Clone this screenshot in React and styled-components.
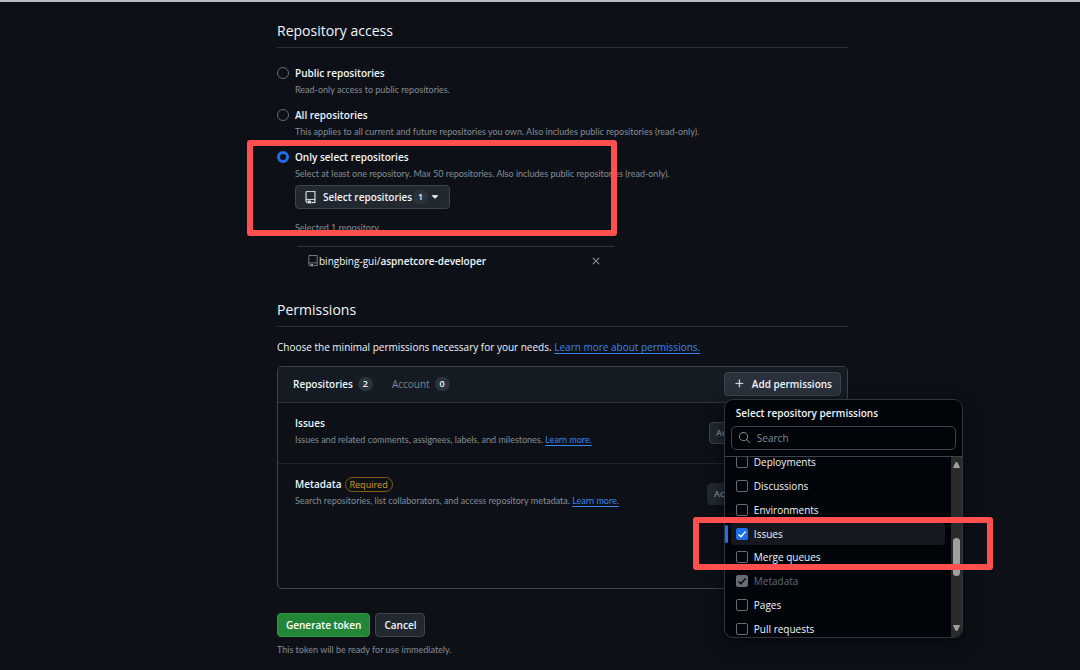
import React from "react";
import styled, { createGlobalStyle } from "styled-components";
import { GoPlus, GoRepo, GoSearch, GoTriangleDown, GoX } from "react-icons/go";

const GlobalStyle = createGlobalStyle`
  * {
    box-sizing: border-box;
  }

  body {
    margin: 0;
    background: #0d1117;
    color: #f0f6fc;
    font-family: "Open Sans", "Noto Sans", sans-serif;
    font-size: 10px;
    line-height: 16px;
  }

  button,
  input {
    font: inherit;
    color: inherit;
    margin: 0;
  }
`;

const Page = styled.main`
  min-height: 100vh;
  border-top: 2px solid #b9bdbf;
  padding: 19px 232px 12px 277px;
`;

const Heading = styled.h2`
  margin: 0;
  padding-bottom: 6px;
  border-bottom: 1px solid #2a3038;
  font-size: 14px;
  line-height: 20px;
  font-weight: 400;
`;

const Section = styled.section`
  margin-bottom: 25px;
`;

const Options = styled.div`
  display: flex;
  flex-direction: column;
  gap: 9px;
  padding-top: 17px;
`;

const Option = styled.div`
  position: relative;
  display: grid;
  grid-template-columns: 12px 1fr;
  column-gap: 6px;
  row-gap: 1px;
  align-items: center;
`;

const Radio = styled.input`
  appearance: none;
  width: 12px;
  height: 12px;
  border: 1px solid #656c76;
  border-radius: 50%;

  &:checked {
    border: 3px solid #1f6feb;
  }
`;

const OptionLabel = styled.label`
  font-weight: 600;
`;

const Note = styled.p`
  grid-column: 2;
  margin: 0;
  color: #858c95;
  font-family: Lato, "Open Sans", sans-serif;
  font-size: 9px;
  line-height: 16px;
`;

const Picker = styled.div`
  grid-column: 2;
  display: flex;
  flex-direction: column;
  align-items: flex-start;
  gap: 11px;
  padding-top: 2px;
`;

const Button = styled.button`
  display: inline-flex;
  align-items: center;
  justify-content: center;
  height: 24px;
  padding: 0 8px;
  border: 1px solid ${(props) => (props.$primary ? "#2e9a43" : "#3d444d")};
  border-radius: 4px;
  background: ${(props) =>
    props.$primary ? "#238636" : props.$open ? "#2a313c" : "#212830"};
  color: ${(props) => (props.$primary ? "#ffffff" : "#f0f6fc")};
  font-weight: 600;
  white-space: nowrap;

  svg {
    flex: none;
    stroke: currentColor;
    stroke-width: 0.4;
  }
`;

const ButtonText = styled.span`
  margin-left: 6px;
`;

const Counter = styled.span`
  display: inline-flex;
  align-items: center;
  justify-content: center;
  min-width: 15px;
  height: 14px;
  border-radius: 7px;
  background: #2c333b;
  color: #f0f6fc;
  font-size: 9px;
  font-weight: 600;

  ${ButtonText} + & {
    margin: 0 1px;
  }
`;

const RepoList = styled.ul`
  width: 316px;
  margin: 10px 0 0 21px;
  padding: 0;
  list-style: none;
`;

const RepoItem = styled.li`
  display: flex;
  align-items: center;
  height: 29px;
  padding: 0 12px 0 9px;
  border-top: 1px solid #2f353d;
`;

const RepoName = styled.span`
  flex: 1;

  b {
    font-weight: 600;
  }
`;

const IconButton = styled.button`
  display: flex;
  padding: 0;
  border: 0;
  background: none;
  color: #9198a1;

  svg {
    stroke: currentColor;
    stroke-width: 0.6;
  }
`;

const Intro = styled.p`
  margin: 12px 0 11px;
`;

const Link = styled.a`
  color: #3c84ee;
  text-decoration: underline;
  text-underline-offset: 2px;
`;

const Panel = styled.div`
  min-height: 223px;
  border: 1px solid #3d444d;
  border-radius: 5px;
`;

const PanelHeader = styled.div`
  display: flex;
  align-items: center;
  height: 36px;
  padding: 0 6px 2px 15px;
  border-bottom: 1px solid #2f353d;
  border-radius: 4px 4px 0 0;
  background: #151b23;
`;

const Tabs = styled.div`
  flex: 1;
  display: flex;
  gap: 19px;
`;

const Tab = styled.button`
  display: flex;
  align-items: center;
  gap: 5px;
  padding: 0;
  border: 0;
  background: none;
  color: ${(props) => (props.$active ? "#f0f6fc" : "#7d848d")};
  font-weight: ${(props) => (props.$active ? 600 : 400)};
`;

const Permission = styled.div`
  display: flex;
  align-items: center;
  justify-content: space-between;
  height: 61px;
  padding: 0 14px 0 17px;
  border-bottom: 1px solid ${(props) => (props.$last ? "transparent" : "#20262e")};
`;

const PermissionText = styled.div`
  padding-bottom: 4px;
`;

const PermissionName = styled.div`
  display: flex;
  align-items: center;
  gap: 3px;
  height: 18px;
  font-weight: 600;
`;

const Required = styled.span`
  padding: 0 4px;
  border: 1px solid #8a5c10;
  border-radius: 8px;
  color: #d29922;
  font-size: 9px;
  line-height: 13px;
  font-weight: 400;
`;

const AccessButton = styled(Button)`
  justify-content: flex-start;
  width: ${(props) => (props.disabled ? 126 : 124)}px;
  height: 22px;
  padding: 0 6px;
  border-color: ${(props) => (props.disabled ? "#212830" : "#3d444d")};
  color: #858c95;
  font-size: 9px;
`;

const MenuAnchor = styled.div`
  position: relative;
`;

const Menu = styled.div`
  position: absolute;
  top: 27px;
  left: 0;
  z-index: 1;
  width: 239px;
  border: 1px solid #2f353d;
  border-radius: 9px;
  background: #010409;
  box-shadow: 0 6px 18px rgba(1, 4, 9, 0.6);
`;

const MenuHeader = styled.div`
  padding: 5px 6px 6px;
  border-bottom: 1px solid #3d444d;
`;

const MenuTitle = styled.div`
  padding: 0 5px 5px;
  font-weight: 600;
`;

const SearchBox = styled.label`
  display: flex;
  align-items: center;
  gap: 6px;
  height: 24px;
  padding: 0 6px;
  border: 1px solid #3d444d;
  border-radius: 5px;
  color: #9198a1;
`;

const SearchInput = styled.input`
  flex: 1;
  min-width: 0;
  padding: 0;
  border: 0;
  outline: 0;
  background: none;

  &::placeholder {
    color: #858c95;
    opacity: 1;
  }
`;

const MenuBody = styled.div`
  display: flex;
  height: 180px;
  overflow: hidden;
  border-radius: 0 0 8px 8px;
`;

/* Starts a few pixels up because the list is scrolled part-way */
const MenuItems = styled.div`
  flex: 1;
  display: grid;
  grid-auto-rows: 1fr;
  gap: 2px;
  height: 188px;
  margin-top: -5px;
  padding: 0 6px;
`;

const MenuItem = styled.label`
  position: relative;
  display: flex;
  align-items: center;
  gap: 6px;
  padding-left: 5px;
  border-radius: 4px;
  background: ${(props) => (props.$selected ? "#15191f" : "none")};
  color: ${(props) => (props.$disabled ? "#656c76" : "#f0f6fc")};

  &::before {
    content: "";
    display: ${(props) => (props.$selected ? "block" : "none")};
    position: absolute;
    top: 2px;
    bottom: 2px;
    left: -6px;
    width: 3px;
    border-radius: 2px;
    background: #1f6feb;
  }
`;

const CheckWrap = styled.span`
  display: grid;

  > * {
    grid-area: 1 / 1;
  }
`;

const Checkbox = styled.input`
  appearance: none;
  width: 12px;
  height: 12px;
  border: 1px solid #656c76;
  border-radius: 2px;

  &:checked {
    border-color: #1f6feb;
    background: #1f6feb;
  }

  &:checked:disabled {
    border-color: #656c76;
    background: #656c76;
  }
`;

const Scrollbar = styled.div`
  display: flex;
  flex-direction: column;
  align-items: center;
  justify-content: space-between;
  width: 11px;
  padding: 5px 0 6px;
  background: #2b2b2b;
`;

const Thumb = styled.div`
  width: 7px;
  height: 38px;
  margin-top: 22px;
  border-radius: 4px;
  background: #9f9f9f;
`;

/* Red frame drawn over the page to point at a control */
const Highlight = styled.div`
  position: absolute;
  z-index: 2;
  top: ${(props) => props.$top}px;
  left: ${(props) => props.$left}px;
  width: ${(props) => props.$width}px;
  height: ${(props) => props.$height}px;
  border: 6px solid #ff504f;
  border-radius: 3px;
  pointer-events: none;
`;

const Actions = styled.div`
  display: flex;
  gap: 5px;
  margin: 24px 0 5px;
`;

const items = [
  { name: "Deployments" },
  { name: "Discussions" },
  { name: "Environments" },
  { name: "Issues", checked: true, selected: true },
  { name: "Merge queues" },
  { name: "Metadata", checked: true, disabled: true },
  { name: "Pages" },
  { name: "Pull requests" },
];

const CheckMark = ({ color }) => (
  <svg width="12" height="12" viewBox="0 0 12 12" aria-hidden="true">
    <path d="M2.5 6.4 5 8.8 9.6 3.4" fill="none" stroke={color} strokeWidth="1.4" />
  </svg>
);

const Arrow = ({ down }) => (
  <svg width="7" height="6" viewBox="0 0 7 6" aria-hidden="true">
    <path
      d={down ? "M0.5 0.5h6L4 5.5H3z" : "M0.5 5.5h6L4 0.5H3z"}
      fill="#9f9f9f"
      stroke="#9f9f9f"
      strokeLinejoin="round"
    />
  </svg>
);

const PermissionMenu = () => (
  <Menu>
    <MenuHeader>
      <MenuTitle>Select repository permissions</MenuTitle>
      <SearchBox>
        <GoSearch size={13} />
        <SearchInput type="text" placeholder="Search" aria-label="Search" />
      </SearchBox>
    </MenuHeader>
    <MenuBody>
      <MenuItems>
        {items.map((item) => (
          <MenuItem key={item.name} $selected={item.selected} $disabled={item.disabled}>
            <CheckWrap>
              <Checkbox
                type="checkbox"
                defaultChecked={item.checked}
                disabled={item.disabled}
              />
              {item.checked && <CheckMark color={item.disabled ? "#010409" : "#ffffff"} />}
            </CheckWrap>
            {item.name}
          </MenuItem>
        ))}
      </MenuItems>
      <Scrollbar>
        <Arrow />
        <Thumb />
        <Arrow down />
      </Scrollbar>
    </MenuBody>
    <Highlight $top={117} $left={-32} $width={300} $height={53} />
  </Menu>
);

const App = () => {
  return (
    <>
      <GlobalStyle />
      <Page>
        <Section>
          <Heading>Repository access</Heading>
          <Options>
            <Option>
              <Radio type="radio" name="access" id="public" />
              <OptionLabel htmlFor="public">Public repositories</OptionLabel>
              <Note>Read-only access to public repositories.</Note>
            </Option>
            <Option>
              <Radio type="radio" name="access" id="all" />
              <OptionLabel htmlFor="all">All repositories</OptionLabel>
              <Note>
                This applies to all current and future repositories you own. Also includes
                public repositories (read-only).
              </Note>
            </Option>
            <Option>
              <Radio type="radio" name="access" id="select" defaultChecked />
              <OptionLabel htmlFor="select">Only select repositories</OptionLabel>
              <Note>
                Select at least one repository. Max 50 repositories. Also includes public
                repositories (read-only).
              </Note>
              <Picker>
                <Button type="button">
                  <GoRepo size={13} />
                  <ButtonText>Select repositories</ButtonText>
                  <Counter>1</Counter>
                  <GoTriangleDown size={12} />
                </Button>
                <Note>Selected 1 repository.</Note>
              </Picker>
              <Highlight $top={-9} $left={-30} $width={370} $height={96} />
            </Option>
          </Options>
          <RepoList>
            <RepoItem>
              <GoRepo size={12} color="#9198a1" />
              <RepoName>
                bingbing-gui/<b>aspnetcore-developer</b>
              </RepoName>
              <IconButton type="button" aria-label="Remove repository">
                <GoX size={12} />
              </IconButton>
            </RepoItem>
          </RepoList>
        </Section>

        <Heading>Permissions</Heading>
        <Intro>
          Choose the minimal permissions necessary for your needs.{" "}
          <Link href="#">Learn more about permissions.</Link>
        </Intro>
        <Panel>
          <PanelHeader>
            <Tabs>
              <Tab type="button" $active>
                Repositories <Counter>2</Counter>
              </Tab>
              <Tab type="button">
                Account <Counter>0</Counter>
              </Tab>
            </Tabs>
            <MenuAnchor>
              <Button type="button" $open>
                <GoPlus size={13} />
                <ButtonText>Add permissions</ButtonText>
              </Button>
              <PermissionMenu />
            </MenuAnchor>
          </PanelHeader>
          <Permission>
            <PermissionText>
              <PermissionName>Issues</PermissionName>
              <Note>
                Issues and related comments, assignees, labels, and milestones.{" "}
                <Link href="#">Learn more.</Link>
              </Note>
            </PermissionText>
            <AccessButton type="button">Access</AccessButton>
          </Permission>
          <Permission $last>
            <PermissionText>
              <PermissionName>
                Metadata <Required>Required</Required>
              </PermissionName>
              <Note>
                Search repositories, list collaborators, and access repository metadata.{" "}
                <Link href="#">Learn more.</Link>
              </Note>
            </PermissionText>
            <AccessButton type="button" disabled>
              Access
            </AccessButton>
          </Permission>
        </Panel>
        <Actions>
          <Button type="button" $primary>
            Generate token
          </Button>
          <Button type="button">Cancel</Button>
        </Actions>
        <Note>This token will be ready for use immediately.</Note>
      </Page>
    </>
  );
};

export default App;
